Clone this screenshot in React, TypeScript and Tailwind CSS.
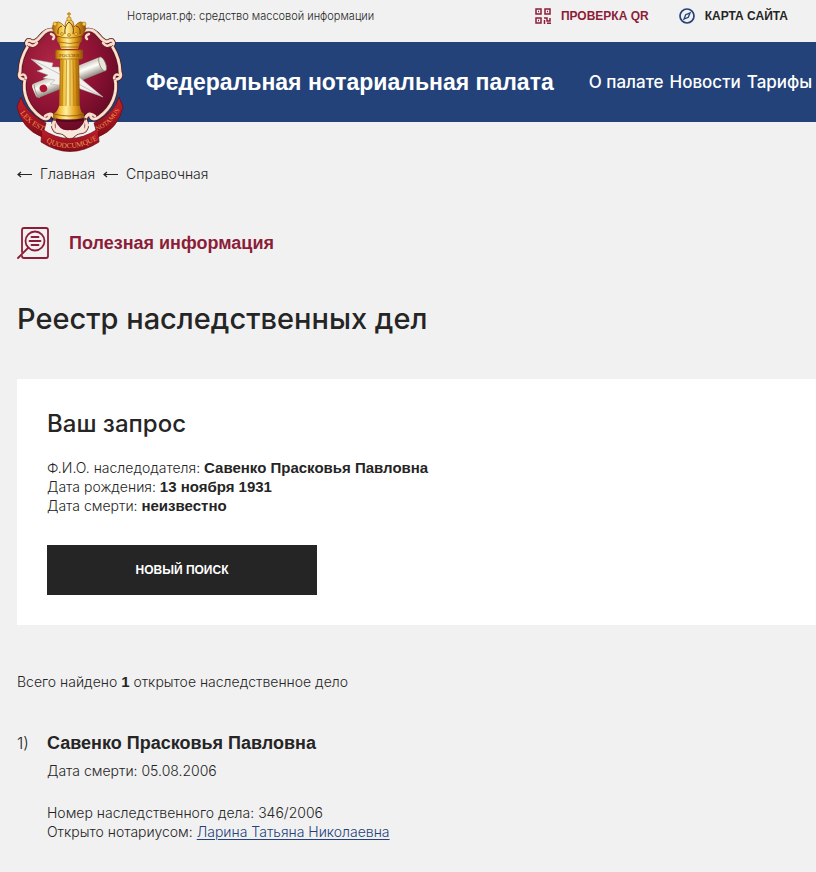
import type { ReactNode } from 'react';

const light = "font-['Inter','Liberation_Sans',sans-serif] font-light";
const medium = "font-['Inter','Liberation_Sans',sans-serif] font-medium";
const bold = "font-['Liberation_Sans',Arial,sans-serif] font-bold";

function Emblem() {
  const frame =
    'M56 31C49 28 45 31 41 36C37 41 34 43 31 41C27 39 25 43 28 46C23 54 20 63 20 72C18 76 20 80 25 79C22 93 28 108 41 117C47 121 50 118 49 115C53 114 56 118 54 122C52 126 54 132 60 132C65 132 67 136 70 139C73 136 75 132 80 132C86 132 88 126 86 122C84 118 87 114 91 115C90 118 93 121 99 117C112 108 118 93 115 79C120 80 122 76 120 72C120 63 117 54 112 46C115 43 113 39 109 41C106 43 103 41 99 36C95 31 91 28 84 31Z';
  return (
    <svg viewBox="0 0 140 160" className="h-40 w-[140px]" role="img" aria-label="Эмблема Федеральной нотариальной палаты">
      <defs>
        <linearGradient id="gold" x1="0" x2="1">
          <stop offset="0" stopColor="#a8640a" />
          <stop offset=".2" stopColor="#f0b92d" />
          <stop offset=".42" stopColor="#fff2a0" />
          <stop offset=".7" stopColor="#e6a41f" />
          <stop offset="1" stopColor="#8f4f05" />
        </linearGradient>
        <radialGradient id="wine" cx=".35" cy=".3" r=".75">
          <stop offset="0" stopColor="#b02746" />
          <stop offset=".55" stopColor="#8d1233" />
          <stop offset="1" stopColor="#5b0821" />
        </radialGradient>
        <linearGradient id="paper" x1="0" y1="0" x2="0" y2="1">
          <stop offset="0" stopColor="#c9c6be" />
          <stop offset=".4" stopColor="#fffef8" />
          <stop offset="1" stopColor="#8e8980" />
        </linearGradient>
        <linearGradient id="ribbon" x1="0" y1="0" x2="0" y2="1">
          <stop offset="0" stopColor="#c51f2a" />
          <stop offset="1" stopColor="#820c18" />
        </linearGradient>
        <path id="motto-left" d="M20 113Q27 124 43 131" />
        <path id="motto-mid" d="M46 142Q70 155 97 140" />
        <path id="motto-right" d="M97 131Q113 124 120 109" />
      </defs>

      <path d="M21 97Q25 112 46 123L42 137Q22 129 17 107Z" fill="url(#ribbon)" stroke="#6d0914" strokeWidth=".7" />
      <path d="M119 97Q115 112 94 123L98 137Q118 129 123 107Z" fill="url(#ribbon)" stroke="#6d0914" strokeWidth=".7" />
      <path d={frame} fill="url(#wine)" stroke="#4b1a1c" strokeWidth="4.5" strokeLinejoin="round" />
      <path d={frame} fill="none" stroke="#f7cfbd" strokeWidth="3" strokeLinejoin="round" />
      <path d={frame} fill="none" stroke="#fff0e4" strokeWidth="1" strokeLinejoin="round" />
      <g fill="none" stroke="#6b2929" strokeWidth=".8">
        <path d="M54 32C47 34 45 38 39 44C35 48 29 49 27 45" />
        <path d="M86 32C93 34 95 38 101 44C105 48 111 49 113 45" />
        <path d="M20 75Q26 74 25 80M120 75Q114 74 115 80" />
      </g>
      <path d="M55 120Q60 132 70 130Q80 132 85 120L84 131Q75 134 70 140Q65 134 56 131Z" fill="#f8e8dc" />
      <g fill="none" stroke="#f9d9c8" strokeWidth="2.5" strokeLinecap="round">
        <path d="M45 116Q51 111 54 117Q56 121 52 125" />
        <path d="M95 116Q89 111 86 117Q84 121 88 125" />
        <path d="M51 34Q56 36 53 39M89 34Q84 36 87 39" />
        <path d="M29 44Q33 48 37 43M111 44Q107 48 103 43M21 75Q25 73 26 78M119 75Q115 73 114 78" />
      </g>

      <g transform="rotate(-22 69 77)">
        <rect x="31" y="70" width="75" height="15" rx="3" fill="url(#paper)" />
        <ellipse cx="105" cy="77.500" rx="3" ry="7.500" fill="#e9e5d8" stroke="#817a70" strokeWidth=".7" />
        <circle cx="41" cy="78" r="3.800" fill="#b01431" />
        <path d="M34 71Q31 78 34 85" fill="none" stroke="#9f9a8e" />
      </g>
      <path d="M31 59L53 63L52 67L59 67L60 72L79 77L103 97L75 87L50 84L55 80L43 78L48 75L37 71L43 69Z" fill="#f3f2f0" stroke="#aaa5a1" strokeWidth=".5" />
      <path d="M31 59L103 97" stroke="#a8a3a1" strokeWidth=".6" />

      <ellipse cx="69" cy="119" rx="18" ry="3" fill="#42051a" opacity=".7" />
      <path d="M60 59H79L80 107H59Z" fill="url(#gold)" />
      <path d="M63 60L62 106M66.500 60L66 106M70 60V106M73 60L74 106M76 60L77 106" stroke="#a86a0c" strokeWidth=".6" />
      <path d="M59 106H80Q80 111 84 114L84 118Q69 121 53 118L53 114Q58 111 59 106Z" fill="url(#gold)" />
      <path d="M54 114Q69 118 84 114" fill="none" stroke="#8c5207" strokeWidth=".8" />
      <path d="M57 37H82Q83 41 80 43L78 49H61L59 43Q56 41 57 37Z" fill="url(#gold)" />
      <path d="M59 42Q70 45 80 42M61 47H78" fill="none" stroke="#8b5105" strokeWidth=".7" />
      <rect x="55.500" y="50" width="27" height="9" rx="1" fill="url(#gold)" stroke="#9b5908" strokeWidth=".7" />
      <text x="69" y="56.500" textAnchor="middle" fontSize="5" fontFamily="Liberation Serif, serif" fill="#754006">РОССИЯ</text>
      <path d="M57 36Q51 30 53 25Q58 18 65 27Q65 20 69 19Q74 20 74 27Q81 18 85 25Q87 30 82 36Q69 40 57 36Z" fill="url(#gold)" stroke="#8a4c05" strokeWidth=".7" />
      <path d="M58 34Q57 27 62 26M80 34Q81 27 76 26M65 34Q64 26 69 22Q75 26 73 34" fill="none" stroke="#774005" strokeWidth="1" />
      <g fill="#f7cd48" stroke="#8a5108" strokeWidth=".5">
        <circle cx="69" cy="19" r="2.200" />
        <circle cx="55" cy="24" r="2" />
        <circle cx="84" cy="24" r="2" />
        <circle cx="62" cy="34" r="1.500" />
        <circle cx="69" cy="35" r="1.500" />
        <circle cx="76" cy="34" r="1.500" />
      </g>
      <path d="M69 17V12M67 14H71" stroke="#c78c18" strokeWidth="1.300" />

      <path d="M42 129Q69 148 98 129L99 142Q70 161 41 142Z" fill="url(#ribbon)" stroke="#6d0914" strokeWidth=".7" />
      <g fill="#f39a54" fontFamily="Liberation Serif, serif" fontSize="7.500">
        <text><textPath href="#motto-left">LEX EST</textPath></text>
        <text><textPath href="#motto-mid">QUODCUMQUE</textPath></text>
        <text fontSize="6.500"><textPath href="#motto-right">NOTAMUS</textPath></text>
      </g>
    </svg>
  );
}

function QrIcon() {
  return (
    <svg viewBox="0 0 16 16" className="size-4 shrink-0" fill="none" stroke="currentColor" strokeWidth="1.500" aria-hidden="true">
      <rect x="1" y="1" width="5" height="5" />
      <rect x="10" y="1" width="5" height="5" />
      <rect x="1" y="10" width="5" height="5" />
      <path d="M3 3.500H4M12 3.500H13M3 12.500H4M9 10H12V13H15V10M9.500 12V16M12 15.300H16" />
    </svg>
  );
}

function CompassIcon() {
  return (
    <svg viewBox="0 0 16 16" className="size-4 shrink-0 text-[#23427a]" fill="none" stroke="currentColor" strokeWidth="1.700" aria-hidden="true">
      <circle cx="8" cy="8" r="7" />
      <path d="M11 5L9.300 9.300L5 11L6.700 6.700Z" strokeWidth="1.300" />
    </svg>
  );
}

function InfoIcon() {
  return (
    <svg viewBox="0 0 32 32" className="size-8 shrink-0" fill="none" stroke="currentColor" strokeWidth="1.800" strokeLinecap="round" aria-hidden="true">
      <path d="M5 25V3Q5 1 7 1H29Q31 1 31 3V29Q31 31 29 31H7Q5 31 5 29" />
      <circle cx="18" cy="14" r="9.500" />
      <path d="M11.500 20.500L1 31M14.500 10H21.500M12.500 14H23.500M14.500 18H21.500" />
    </svg>
  );
}

function BackArrow() {
  return (
    <svg viewBox="0 0 15 10" className="h-[10px] w-[15px] shrink-0" fill="none" stroke="currentColor" aria-hidden="true">
      <path d="M1 5.500H15M4 3L1 5.500L4 8" strokeWidth="1.200" />
    </svg>
  );
}

function Crumb({ children }: { children: ReactNode }) {
  return (
    <li>
      <a href="#" className="flex items-center gap-2">
        <BackArrow />
        {children}
      </a>
    </li>
  );
}

export default function App() {
  return (
    <div className={`${light} min-h-screen overflow-x-hidden bg-[#f1f1f1] text-[14px] leading-[19px] text-[#252525]`}>
      <header className="relative">
        <div className="flex h-[42px] items-center justify-between pr-7 pb-[10px] pl-[127px]">
          <p className="text-[11px]">Нотариат.рф: средство массовой информации</p>
          <div className={`${bold} flex gap-[30px] text-[12px] whitespace-nowrap`}>
            <a href="#" className="flex items-center gap-[10px] text-[#8c1d38]">
              <QrIcon />
              ПРОВЕРКА QR
            </a>
            <a href="#" className="flex items-center gap-[10px]">
              <CompassIcon />
              КАРТА САЙТА
            </a>
          </div>
        </div>
        <div className="flex h-20 items-center gap-[35px] bg-[#23427a] pl-[146px] whitespace-nowrap text-white">
          <a href="#" className={`${bold} text-[23px] leading-7`}>Федеральная нотариальная палата</a>
          <nav className={`${medium} flex gap-[6px] text-[17px]`}>
            <a href="#">О палате</a>
            <a href="#">Новости</a>
            <a href="#">Тарифы</a>
          </nav>
        </div>
        <a href="#" className="absolute top-0 left-0"><Emblem /></a>
      </header>

      <main className="pl-[17px]">
        <nav aria-label="Навигация" className="pt-[42px]">
          <ol className="flex gap-2">
            <Crumb>Главная</Crumb>
            <Crumb>Справочная</Crumb>
          </ol>
        </nav>

        <div className={`${bold} mt-11 flex items-center gap-5 text-[18px] text-[#8c1d38]`}>
          <InfoIcon />
          Полезная информация
        </div>

        <h1 className={`${medium} mt-10 text-[29px] leading-10`}>Реестр наследственных дел</h1>

        <section className="mt-10 bg-white p-[30px]">
          <h2 className={`${medium} text-[24px] leading-[30px]`}>Ваш запрос</h2>
          <div className="mt-[19px]">
            <p>Ф.И.О. наследодателя: <b className={`${bold} text-[15px]`}>Савенко Прасковья Павловна</b></p>
            <p>Дата рождения: <b className={`${bold} text-[15px]`}>13 ноября 1931</b></p>
            <p>Дата смерти: <b className={`${bold} text-[15px]`}>неизвестно</b></p>
          </div>
          <button type="button" className={`${bold} mt-[30px] block h-[50px] w-[270px] bg-[#252525] text-[12px] text-white`}>
            НОВЫЙ ПОИСК
          </button>
        </section>

        <p className="mt-[47px]">Всего найдено <b className={`${bold} text-[15px]`}>1</b> открытое наследственное дело</p>

        <ol className="mt-10 pb-[30px]">
          <li className="flex">
            <span className="w-[30px] shrink-0 text-[16px] leading-6">1)</span>
            <div>
              <h3 className={`${bold} text-[18px] leading-6`}>Савенко Прасковья Павловна</h3>
              <p className="mt-[6px]">Дата смерти: 05.08.2006</p>
              <p className="mt-[23px]">Номер наследственного дела: 346/2006</p>
              <p>Открыто нотариусом: <a href="#" className="text-[#23427a] underline underline-offset-2">Ларина Татьяна Николаевна</a></p>
            </div>
          </li>
        </ol>
      </main>
    </div>
  );
}
